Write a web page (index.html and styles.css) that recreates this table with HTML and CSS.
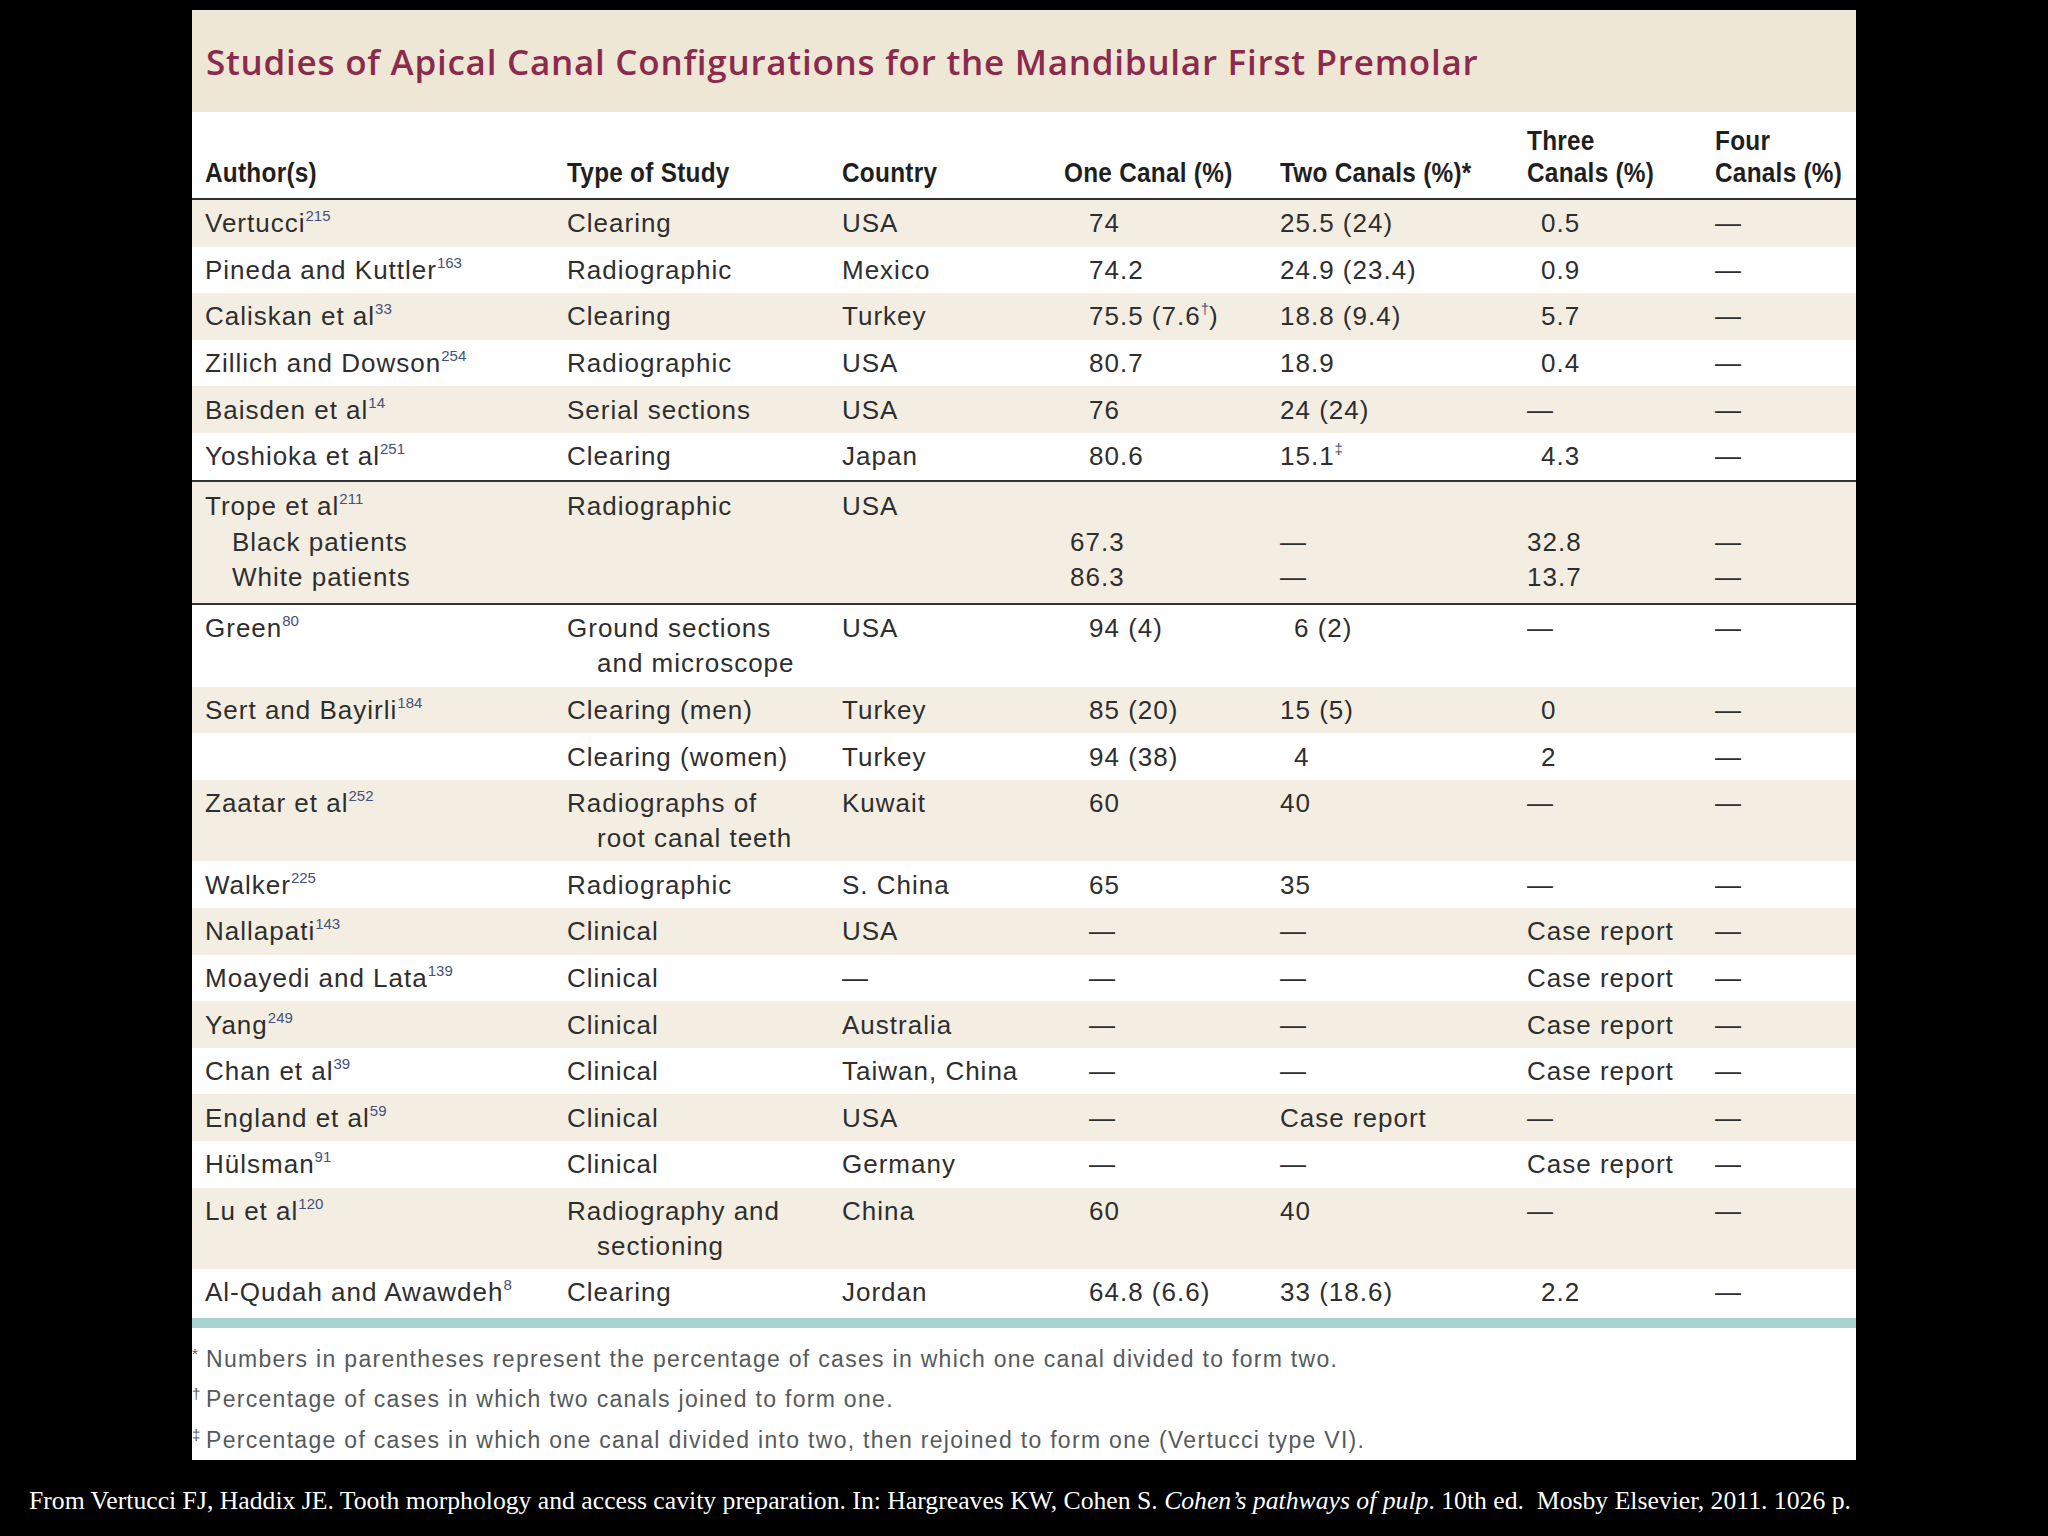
FILE: index.html
```html
<!DOCTYPE html>
<html lang="en">
<head>
<meta charset="utf-8">
<title>Studies of Apical Canal Configurations for the Mandibular First Premolar</title>
<link rel="stylesheet" href="styles.css">
</head>
<body>
<div class="slide">
  <div class="card">
    <div class="title-band">
      <h1 class="title">Studies of Apical Canal Configurations for the Mandibular First Premolar</h1>
    </div>
    <table class="data">
      <colgroup>
        <col class="c1"><col class="c2"><col class="c3"><col class="c4"><col class="c5"><col class="c6"><col class="c7">
      </colgroup>
      <thead>
        <tr>
          <th><span class="hd">Author(s)</span></th>
          <th><span class="hd">Type of Study</span></th>
          <th><span class="hd">Country</span></th>
          <th><span class="hd">One Canal (%)</span></th>
          <th><span class="hd">Two Canals (%)*</span></th>
          <th><span class="hd">Three<br>Canals (%)</span></th>
          <th><span class="hd">Four<br>Canals (%)</span></th>
        </tr>
      </thead>
      <tbody>
        <tr class="b"><td>Vertucci<sup>215</sup></td><td>Clearing</td><td>USA</td><td class="n4">74</td><td>25.5 (24)</td><td class="n6">0.5</td><td>—</td></tr>
        <tr><td>Pineda and Kuttler<sup>163</sup></td><td>Radiographic</td><td>Mexico</td><td class="n4">74.2</td><td>24.9 (23.4)</td><td class="n6">0.9</td><td>—</td></tr>
        <tr class="b"><td>Caliskan et al<sup>33</sup></td><td>Clearing</td><td>Turkey</td><td class="n4">75.5 (7.6<sup>†</sup>)</td><td>18.8 (9.4)</td><td class="n6">5.7</td><td>—</td></tr>
        <tr><td>Zillich and Dowson<sup>254</sup></td><td>Radiographic</td><td>USA</td><td class="n4">80.7</td><td>18.9</td><td class="n6">0.4</td><td>—</td></tr>
        <tr class="b"><td>Baisden et al<sup>14</sup></td><td>Serial sections</td><td>USA</td><td class="n4">76</td><td>24 (24)</td><td>—</td><td>—</td></tr>
        <tr><td>Yoshioka et al<sup>251</sup></td><td>Clearing</td><td>Japan</td><td class="n4">80.6</td><td>15.1<sup>‡</sup></td><td class="n6">4.3</td><td>—</td></tr>
      </tbody>
      <tbody class="group">
        <tr class="b trope">
          <td>Trope et al<sup>211</sup><br><span class="sub">Black patients</span><br><span class="sub">White patients</span></td>
          <td>Radiographic</td>
          <td>USA</td>
          <td class="n4t"><br>67.3<br>86.3</td>
          <td><br>—<br>—</td>
          <td><br>32.8<br>13.7</td>
          <td><br>—<br>—</td>
        </tr>
      </tbody>
      <tbody>
        <tr><td>Green<sup>80</sup></td><td class="hang">Ground sections<br>and microscope</td><td>USA</td><td class="n4">94 (4)</td><td class="n5">6 (2)</td><td>—</td><td>—</td></tr>
        <tr class="b"><td>Sert and Bayirli<sup>184</sup></td><td>Clearing (men)</td><td>Turkey</td><td class="n4">85 (20)</td><td>15 (5)</td><td class="n6">0</td><td>—</td></tr>
        <tr><td></td><td>Clearing (women)</td><td>Turkey</td><td class="n4">94 (38)</td><td class="n5">4</td><td class="n6">2</td><td>—</td></tr>
        <tr class="b"><td>Zaatar et al<sup>252</sup></td><td class="hang">Radiographs of<br>root canal teeth</td><td>Kuwait</td><td class="n4">60</td><td>40</td><td>—</td><td>—</td></tr>
        <tr><td>Walker<sup>225</sup></td><td>Radiographic</td><td>S. China</td><td class="n4">65</td><td>35</td><td>—</td><td>—</td></tr>
        <tr class="b"><td>Nallapati<sup>143</sup></td><td>Clinical</td><td>USA</td><td class="n4">—</td><td>—</td><td>Case report</td><td>—</td></tr>
        <tr><td>Moayedi and Lata<sup>139</sup></td><td>Clinical</td><td>—</td><td class="n4">—</td><td>—</td><td>Case report</td><td>—</td></tr>
        <tr class="b"><td>Yang<sup>249</sup></td><td>Clinical</td><td>Australia</td><td class="n4">—</td><td>—</td><td>Case report</td><td>—</td></tr>
        <tr><td>Chan et al<sup>39</sup></td><td>Clinical</td><td>Taiwan, China</td><td class="n4">—</td><td>—</td><td>Case report</td><td>—</td></tr>
        <tr class="b"><td>England et al<sup>59</sup></td><td>Clinical</td><td>USA</td><td class="n4">—</td><td>Case report</td><td>—</td><td>—</td></tr>
        <tr><td>Hülsman<sup>91</sup></td><td>Clinical</td><td>Germany</td><td class="n4">—</td><td>—</td><td>Case report</td><td>—</td></tr>
        <tr class="b"><td>Lu et al<sup>120</sup></td><td class="hang">Radiography and<br>sectioning</td><td>China</td><td class="n4">60</td><td>40</td><td>—</td><td>—</td></tr>
        <tr><td>Al-Qudah and Awawdeh<sup>8</sup></td><td>Clearing</td><td>Jordan</td><td class="n4">64.8 (6.6)</td><td>33 (18.6)</td><td class="n6">2.2</td><td>—</td></tr>
      </tbody>
    </table>
    <div class="rule"></div>
    <div class="notes">
      <p><span class="mark">*</span>Numbers in parentheses represent the percentage of cases in which one canal divided to form two.</p>
      <p><span class="mark">†</span>Percentage of cases in which two canals joined to form one.</p>
      <p><span class="mark">‡</span>Percentage of cases in which one canal divided into two, then rejoined to form one (Vertucci type VI).</p>
    </div>
  </div>
  <p class="cite">From Vertucci FJ, Haddix JE. Tooth morphology and access cavity preparation. In: Hargreaves KW, Cohen S. <em>Cohen’s pathways of pulp</em>. 10th ed.&nbsp; Mosby Elsevier, 2011. 1026 p.</p>
</div>
</body>
</html>
```

FILE: styles.css
```css
html, body {
  margin: 0;
  padding: 0;
  background: #000;
}

.slide {
  width: 2048px;
  height: 1536px;
  padding-top: 10px;
  box-sizing: border-box;
  overflow: hidden;
}

.card {
  width: 1664px;
  margin: 0 auto;
  background: #fff;
}

.title-band {
  height: 102px;
  background: #efe7d5;
  display: flex;
  align-items: center;
  padding-left: 14px;
}

.title {
  margin: 0;
  font-family: "Open Sans", Lato, sans-serif;
  font-weight: 600;
  font-size: 35px;
  color: #8c2a4e;
  letter-spacing: 0.75px;
  white-space: nowrap;
}

.data {
  width: 1664px;
  table-layout: fixed;
  border-collapse: collapse;
  font-family: "Liberation Sans", Arial, sans-serif;
  font-size: 26px;
  color: #2e2e2e;
  letter-spacing: 1px;
}

.c1 { width: 362px; }
.c2 { width: 275px; }
.c3 { width: 222px; }
.c4 { width: 216px; }
.c5 { width: 247px; }
.c6 { width: 188px; }
.c7 { width: 154px; }

.data th {
  font-family: "Liberation Sans", Arial, sans-serif;
  font-weight: 700;
  font-size: 28px;
  color: #1f1f1f;
  text-align: left;
  vertical-align: bottom;
  line-height: 32px;
  padding: 13px 0 9px 13px;
  height: 64px;
  border-bottom: 2px solid #333;
  letter-spacing: 0.3px;
  white-space: nowrap;
}

.hd {
  display: inline-block;
  transform: scaleX(0.87);
  transform-origin: left bottom;
}

.data td {
  padding: 6.3px 0 5.3px 13px;
  line-height: 35px;
  vertical-align: top;
  white-space: nowrap;
}

.data tr.b td {
  background: #f4eee2;
}

.data td.n4 { padding-left: 38px; }
.data td.n4t { padding-left: 19px; }
.data td.n5 { padding-left: 27px; }
.data td.n6 { padding-left: 27px; }

.data td.hang {
  padding-left: 43px;
  text-indent: -30px;
}

.group {
  border-top: 2px solid #333;
  border-bottom: 2px solid #333;
}

.data tr.trope td {
  padding-top: 7.5px;
  padding-bottom: 7.5px;
  line-height: 35.5px;
}

.sub {
  padding-left: 27px;
}

sup {
  font-size: 15px;
  line-height: 0;
  vertical-align: 11px;
  letter-spacing: 0;
  color: #44507a;
}

.rule {
  height: 10px;
  background: #a9d3d1;
  margin-top: 2px;
}

.notes {
  padding: 11px 0 0 0;
  font-family: "Liberation Sans", Arial, sans-serif;
  font-size: 23px;
  color: #555a5a;
  letter-spacing: 1.3px;
}

.notes p {
  margin: 0;
  line-height: 40.5px;
  height: 40.5px;
}

.mark {
  display: inline-block;
  width: 14px;
  font-size: 15px;
  vertical-align: 8px;
  line-height: 0;
  letter-spacing: 0;
  text-align: left;
}

.cite {
  margin: 26px 0 0 29px;
  font-family: "Liberation Serif", "Times New Roman", serif;
  font-size: 25.7px;
  line-height: 30px;
  color: #fff;
  white-space: nowrap;
}
```
